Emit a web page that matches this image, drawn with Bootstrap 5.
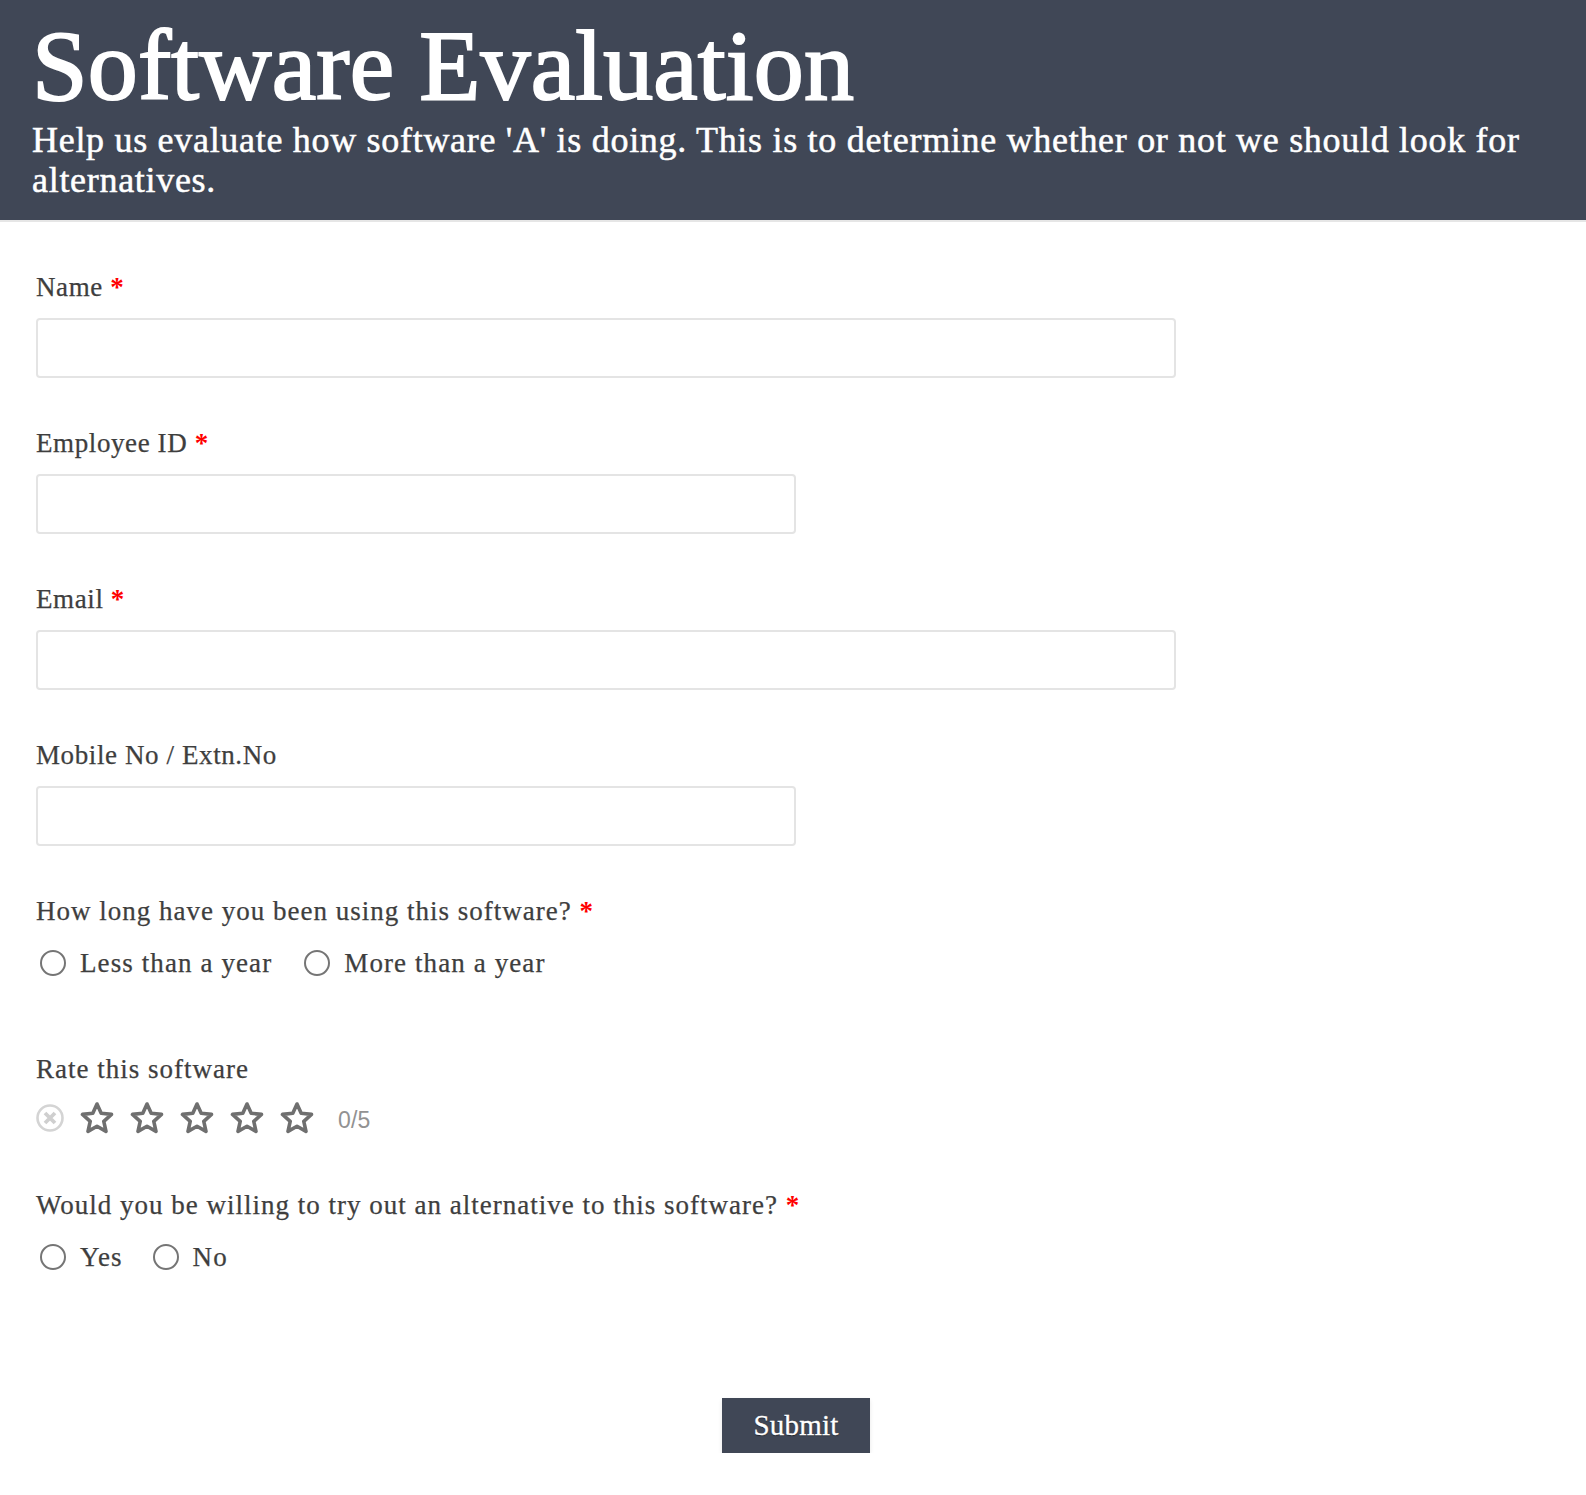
<!DOCTYPE html>
<html lang="en"><head><meta charset="utf-8"><title>Software Evaluation</title>
<link href="https://cdn.jsdelivr.net/npm/bootstrap@5.3.0/dist/css/bootstrap.min.css" rel="stylesheet">
<style>
body{font-family:"Liberation Serif",serif;color:#3e3e3e;background:#fff}
.hero{background:#404756;color:#fff;height:222px;padding:18px 33px 0 32px;border-bottom:2px solid #e6e6e6}
.hero h1{font-family:inherit;font-size:100px;line-height:96px;margin:0 0 6px;letter-spacing:.15px;font-weight:400;-webkit-text-stroke:2px #fff}
.hero p{font-size:36px;line-height:40px;margin:0;letter-spacing:.7px;-webkit-text-stroke:.5px #fff}
.fields{padding:46px 36px 0}
.fld{margin-bottom:46px}
.fld-label{display:block;font-size:27px;line-height:36px;padding-top:1px;margin:0 0 13px;letter-spacing:1px;-webkit-text-stroke:.25px #3e3e3e}
.fld-label.tight{letter-spacing:.6px}
.req{color:#f00;font-size:27px;font-weight:700;-webkit-text-stroke:0}
.wide{width:1140px}.mid{width:760px}
.fld .form-control{height:60px;border:2px solid #e4e4e4;border-radius:4px}
.opts{height:36px;margin-top:16px;display:flex;align-items:center}
.fld-label:has(+ .opts),.fld-label:has(+ .stars){margin-bottom:0}
.opts .form-check{display:flex;align-items:center;margin:0 26px 0 4px;padding:0;min-height:0}
.opts.roomy .form-check{margin-right:28px}
.opts .form-check-input{width:26px;height:26px;margin:0 14px 0 0;float:none;border:2px solid #757575}
.opts .form-check-label{font-size:27px;line-height:36px;letter-spacing:1.1px;-webkit-text-stroke:.25px #3e3e3e}
.stars{height:32px;margin-top:15px;display:flex;align-items:center}
.stars svg{display:block;margin-right:16px}
.score{font-family:"Liberation Sans",sans-serif;font-size:23px;letter-spacing:.2px;color:#929292;margin:4px 0 0 8px}
.send{display:block;margin:0 auto;width:148px;height:55px;background:#404756;color:#fff;border:0;border-radius:0;font-size:29px;line-height:1;letter-spacing:.2px;box-shadow:0 2px 4px rgba(0,0,0,.1);text-shadow:0 1px 1px rgba(0,0,0,.5);-webkit-text-stroke:.3px #fff}
.send:hover{background:#404756;color:#fff}
.send-row{padding:77px 0 0 6px}
.gap-a{margin-bottom:69px}
.gap-b{margin-bottom:52px}
</style></head>
<body>
<header class="hero">
<h1>Software Evaluation</h1>
<p>Help us evaluate how software 'A' is doing. This is to determine whether or not we should look for alternatives.</p>
</header>
<form class="fields">
<div class="fld wide"><label class="fld-label tight" for="a">Name <span class="req">*</span></label><input id="a" class="form-control" type="text"></div>
<div class="fld mid"><label class="fld-label tight" for="b">Employee ID <span class="req">*</span></label><input id="b" class="form-control" type="text"></div>
<div class="fld wide"><label class="fld-label tight" for="c">Email <span class="req">*</span></label><input id="c" class="form-control" type="text"></div>
<div class="fld mid"><label class="fld-label tight" for="d">Mobile No / Extn.No</label><input id="d" class="form-control" type="text"></div>
<div class="fld gap-a"><span class="fld-label">How long have you been using this software? <span class="req">*</span></span>
<div class="opts roomy"><div class="form-check"><input class="form-check-input" type="radio" name="t" id="t1"><label class="form-check-label" for="t1">Less than a year</label></div>
<div class="form-check"><input class="form-check-input" type="radio" name="t" id="t2"><label class="form-check-label" for="t2">More than a year</label></div></div></div>
<div class="fld gap-b"><span class="fld-label">Rate this software</span>
<div class="stars">
<svg width="28" height="28" viewBox="0 0 28 28" fill="none" stroke="#d4d4d4"><circle cx="14" cy="14" r="12.5" stroke-width="2.600"/><path d="M9 9l10 10M19 9L9 19" stroke-width="3.800" stroke="#cfcfcf"/></svg>
<svg width="34" height="34" viewBox="0 0 34 34" fill="none" stroke="#6f6f6f" stroke-width="3.6" stroke-linejoin="round"><path d="M17 3l4.200 9.300 10.300 1.100-7.700 6.900 2.200 10.100L17 25.200 8 30.400l2.200-10.100-7.700-6.900 10.300-1.100z"/></svg>
<svg width="34" height="34" viewBox="0 0 34 34" fill="none" stroke="#6f6f6f" stroke-width="3.6" stroke-linejoin="round"><path d="M17 3l4.200 9.300 10.300 1.100-7.700 6.900 2.200 10.100L17 25.200 8 30.400l2.200-10.100-7.700-6.900 10.300-1.100z"/></svg>
<svg width="34" height="34" viewBox="0 0 34 34" fill="none" stroke="#6f6f6f" stroke-width="3.6" stroke-linejoin="round"><path d="M17 3l4.200 9.300 10.300 1.100-7.700 6.900 2.200 10.100L17 25.200 8 30.400l2.200-10.100-7.700-6.900 10.300-1.100z"/></svg>
<svg width="34" height="34" viewBox="0 0 34 34" fill="none" stroke="#6f6f6f" stroke-width="3.6" stroke-linejoin="round"><path d="M17 3l4.200 9.300 10.300 1.100-7.700 6.900 2.200 10.100L17 25.200 8 30.400l2.200-10.100-7.700-6.900 10.300-1.100z"/></svg>
<svg width="34" height="34" viewBox="0 0 34 34" fill="none" stroke="#6f6f6f" stroke-width="3.6" stroke-linejoin="round"><path d="M17 3l4.200 9.300 10.300 1.100-7.700 6.900 2.200 10.100L17 25.200 8 30.400l2.200-10.100-7.700-6.900 10.300-1.100z"/></svg>
<span class="score">0/5</span></div></div>
<div class="fld"><span class="fld-label">Would you be willing to try out an alternative to this software? <span class="req">*</span></span>
<div class="opts"><div class="form-check"><input class="form-check-input" type="radio" name="y" id="y1"><label class="form-check-label" for="y1">Yes</label></div>
<div class="form-check"><input class="form-check-input" type="radio" name="y" id="y2"><label class="form-check-label" for="y2">No</label></div></div></div>
<div class="send-row"><button type="button" class="btn send">Submit</button></div>
</form>
</body></html>
